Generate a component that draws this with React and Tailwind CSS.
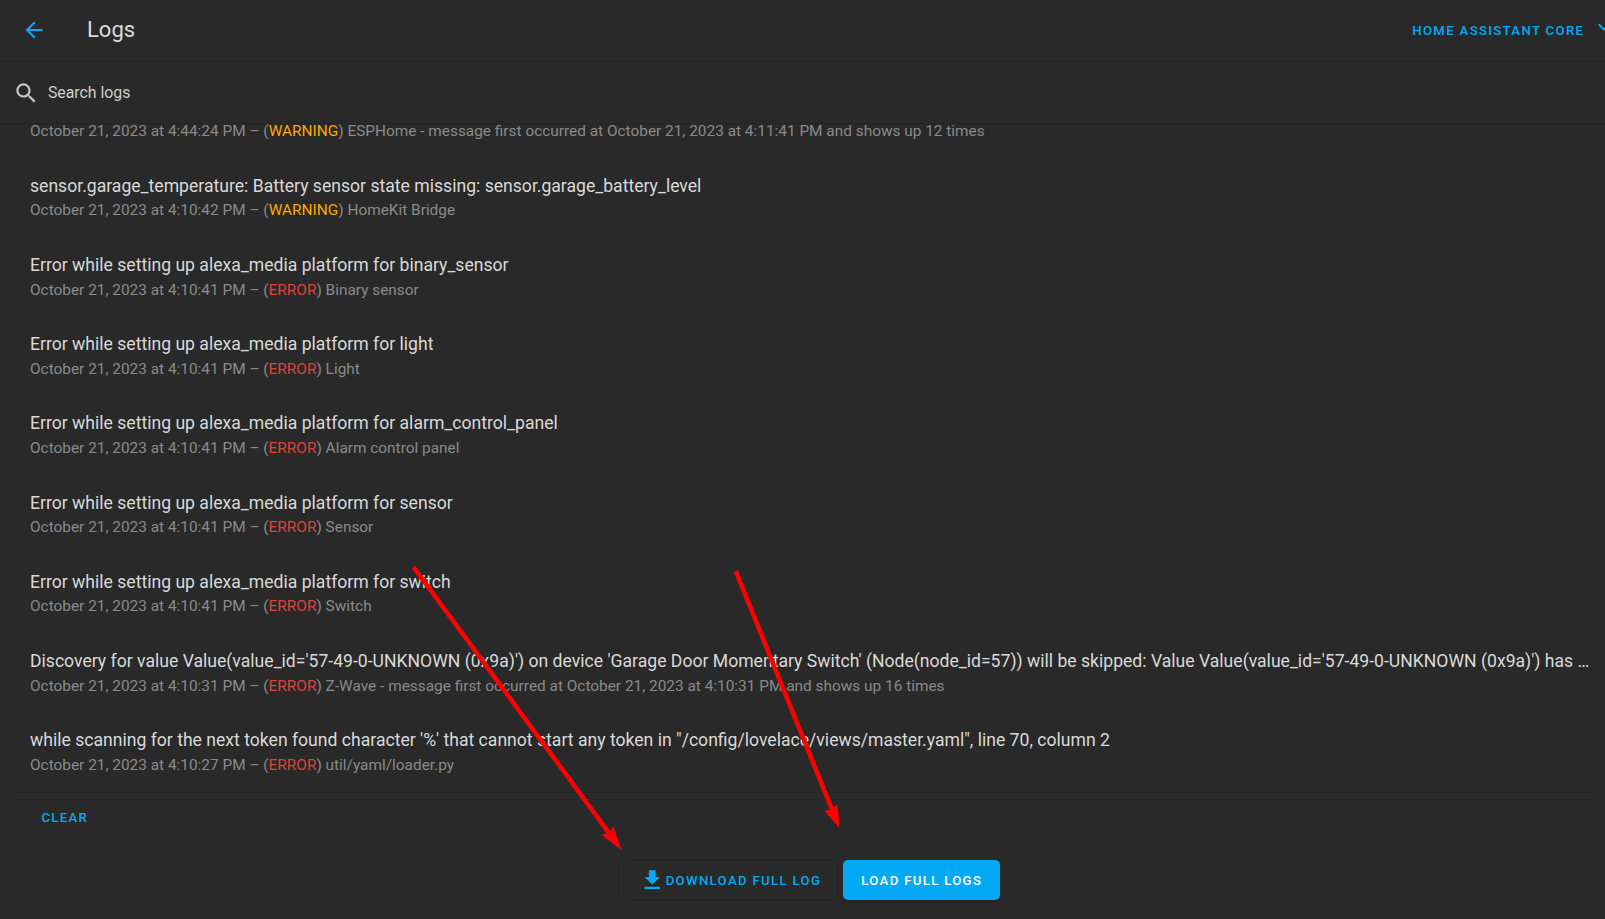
import React from 'react';

const logs = [
  { title: 'sensor.garage_temperature: Battery sensor state missing: sensor.garage_battery_level', meta: 'October 21, 2023 at 4:10:42 PM', level: 'WARNING', source: 'HomeKit Bridge' },
  { title: 'Error while setting up alexa_media platform for binary_sensor', meta: 'October 21, 2023 at 4:10:41 PM', level: 'ERROR', source: 'Binary sensor' },
  { title: 'Error while setting up alexa_media platform for light', meta: 'October 21, 2023 at 4:10:41 PM', level: 'ERROR', source: 'Light' },
  { title: 'Error while setting up alexa_media platform for alarm_control_panel', meta: 'October 21, 2023 at 4:10:41 PM', level: 'ERROR', source: 'Alarm control panel' },
  { title: 'Error while setting up alexa_media platform for sensor', meta: 'October 21, 2023 at 4:10:41 PM', level: 'ERROR', source: 'Sensor' },
  { title: 'Error while setting up alexa_media platform for switch', meta: 'October 21, 2023 at 4:10:41 PM', level: 'ERROR', source: 'Switch' },
  { title: "Discovery for value Value(value_id='57-49-0-UNKNOWN (0x9a)') on device 'Garage Door Momentary Switch' (Node(node_id=57)) will be skipped: Value Value(value_id='57-49-0-UNKNOWN (0x9a)') has …", meta: 'October 21, 2023 at 4:10:31 PM', level: 'ERROR', source: 'Z-Wave - message first occurred at October 21, 2023 at 4:10:31 PM and shows up 16 times' },
  { title: 'while scanning for the next token found character \'%\' that cannot start any token in "/config/lovelace/views/master.yaml", line 70, column 2', meta: 'October 21, 2023 at 4:10:27 PM', level: 'ERROR', source: 'util/yaml/loader.py' },
];

const LogMeta = ({ log, className }) => (
  <div className={`text-[15.4px] text-[#8a8a8a] whitespace-nowrap ${className}`}>
    {log.meta} – (
    <span className={log.level === 'ERROR' ? 'text-[#db4437]' : 'text-[#ffa600]'}>{log.level}</span>
    ) {log.source}
  </div>
);

const LogRow = ({ log }) => (
  <div className="h-[79.2px] flex flex-col justify-center pl-[17.6px]">
    <div className="text-[17.6px] leading-[24px] text-[#d9d9d9] whitespace-nowrap">{log.title}</div>
    <LogMeta log={log} className="mt-[1.6px] leading-[22px]" />
  </div>
);

const firstLog = {
  meta: 'October 21, 2023 at 4:44:24 PM',
  level: 'WARNING',
  source: 'ESPHome - message first occurred at October 21, 2023 at 4:11:41 PM and shows up 12 times',
};

const App = () => {
  return (
    <div className="relative h-[919px] w-full overflow-hidden bg-[#292929] font-['Roboto',sans-serif] flex flex-col">
      <header className="h-[62px] shrink-0 border-b border-[#242424] flex items-center pb-[1px]">
        <svg className="w-[26px] h-[26px] ml-[21px] text-[#03a9f4]" viewBox="0 0 24 24" fill="currentColor">
          <path d="M20,11V13H8L13.5,18.5L12.08,19.92L4.16,12L12.08,4.08L13.5,5.5L8,11H20Z" />
        </svg>
        <h1 className="ml-[40px] mb-[2px] text-[22px] font-normal text-[#dcdcdc]">Logs</h1>
        <div className="ml-auto flex items-center text-[#03a9f4] mr-[-11.3px]">
          <span className="pt-[2px] text-[13.2px] font-medium tracking-[1.32px]">HOME ASSISTANT CORE</span>
          <svg className="w-[24px] h-[24px] ml-[8px] mb-[6px]" viewBox="0 0 24 24" fill="currentColor">
            <path d="M7.41,8.58L12,13.17L16.59,8.58L18,10L12,16L6,10L7.41,8.58Z" />
          </svg>
        </div>
      </header>

      <div className="h-[62px] shrink-0 border-b border-[#242424] flex items-center pl-[13px] pt-[2px]">
        <svg className="w-[26.4px] h-[26.4px] text-[#c8c8c8]" viewBox="0 0 24 24" fill="currentColor">
          <path d="M9.5,3A6.5,6.5 0 0,1 16,9.5C16,11.11 15.41,12.59 14.44,13.73L14.71,14H15.5L20.5,19L19,20.5L14,15.5V14.71L13.73,14.44C12.59,15.41 11.11,16 9.5,16A6.5,6.5 0 0,1 3,9.5A6.5,6.5 0 0,1 9.5,3M9.5,5C7,5 5,7 5,9.5C5,12 7,14 9.5,14C12,14 14,12 14,9.5C14,7 12,5 9.5,5Z" />
        </svg>
        <span className="ml-[8.5px] mb-[1.5px] text-[15.84px] text-[#cfcfcf]">Search logs</span>
      </div>

      <div className="px-[12.4px]">
        <div className="h-[34.1px] pl-[17.6px]">
          <LogMeta log={firstLog} className="leading-[14.4px]" />
        </div>
        {logs.map((log, i) => (
          <LogRow key={i} log={log} />
        ))}
        <div className="border-t border-[#242424] h-[52.3px] flex items-center pl-[29px]">
          <span className="text-[13.2px] font-medium tracking-[1.32px] text-[#03a9f4]">CLEAR</span>
        </div>
      </div>

      <div className="mt-[16px] flex justify-center pl-[18px] gap-[5px]">
        <button className="h-[40px] w-[215.5px] flex items-center pl-[15px] rounded-[5px] border border-[#242424] text-[#03a9f4]">
          <svg className="w-[26.4px] h-[26.4px]" viewBox="0 0 24 24" fill="currentColor">
            <path d="M5,20H19V18H5M19,9H15V3H9V9H5L12,16L19,9Z" />
          </svg>
          <span className="ml-[0.5px] pt-[2px] text-[13.2px] font-medium tracking-[1.32px]">DOWNLOAD FULL LOG</span>
        </button>
        <button className="h-[40px] w-[157px] pt-[2px] rounded-[5px] bg-[#03a9f4] text-white text-[13.2px] font-medium tracking-[1.32px] shadow">
          LOAD FULL LOGS
        </button>
      </div>

      <svg className="absolute inset-0 z-20 w-full h-full pointer-events-none" viewBox="0 0 1605 919">
        <line x1="413.5" y1="567" x2="612" y2="837" stroke="#ff0000" strokeWidth="4.5" />
        <path d="M621.5 850 L601.7 835 L610.5 832 L613.3 826 Z" fill="#ff0000" />
        <line x1="735.7" y1="571" x2="833" y2="812" stroke="#ff0000" strokeWidth="4.5" />
        <path d="M839.5 828 L824.3 811 L832 809 L837.7 804.3 Z" fill="#ff0000" />
      </svg>
    </div>
  );
};

export default App;
